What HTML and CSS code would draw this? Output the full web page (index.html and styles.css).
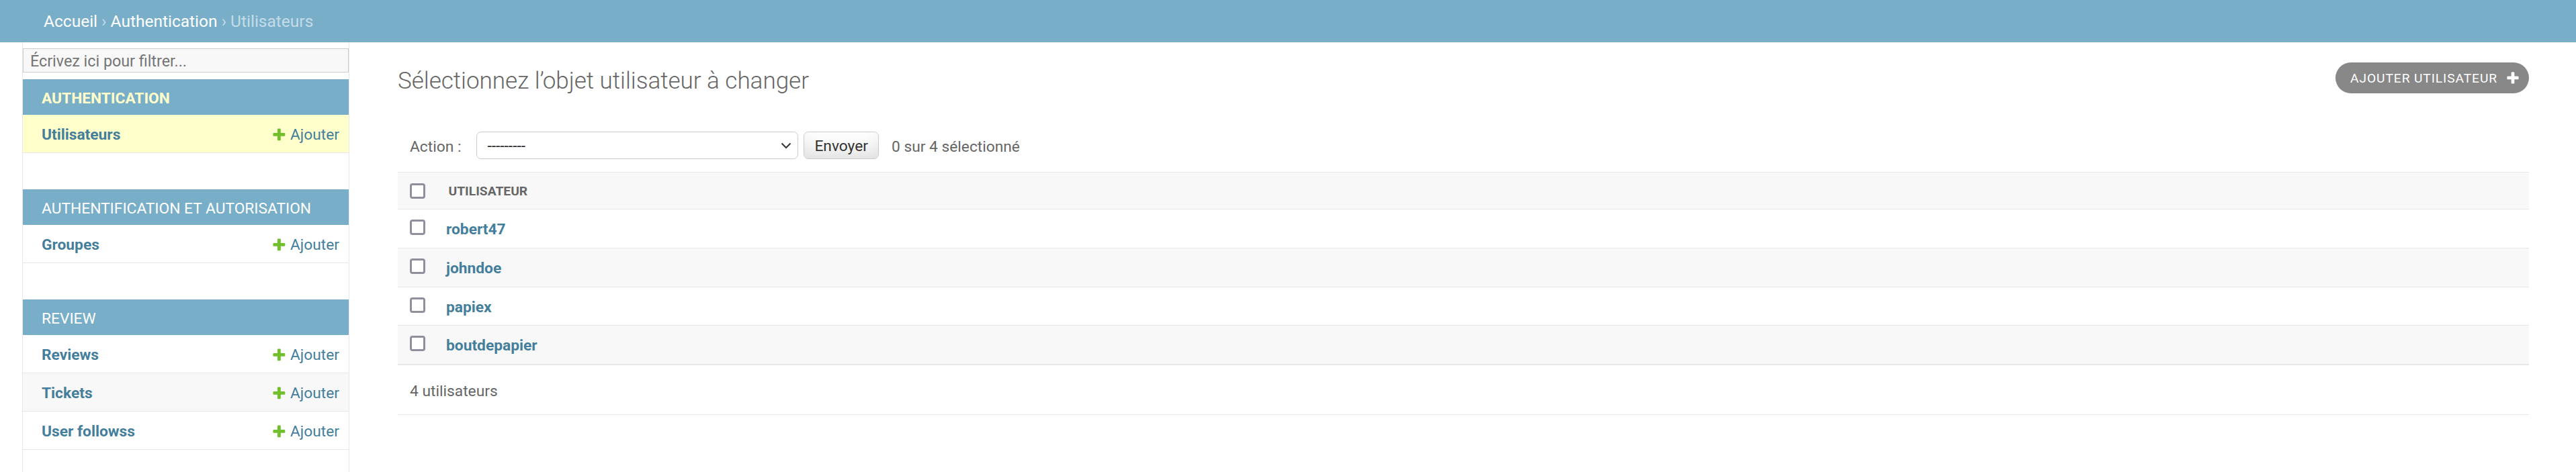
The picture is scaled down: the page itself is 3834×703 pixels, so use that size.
FILE: index.html
```html
<!DOCTYPE html>
<html lang="fr">
<head>
<meta charset="utf-8">
<title>Sélectionnez l’objet utilisateur à changer | Site d’administration de Django</title>
<link rel="stylesheet" href="styles.css">
</head>
<body>
<div class="breadcrumbs">
  <a href="#">Accueil</a> › <a href="#">Authentication</a> › Utilisateurs
</div>
<div class="main">
  <button class="toggle-nav" type="button" aria-label="Afficher/masquer la barre de navigation"></button>
  <nav class="sidebar">
    <input class="nav-filter" type="search" placeholder="Écrivez ici pour filtrer..." aria-label="Écrivez ici pour filtrer...">

    <div class="app-module">
      <div class="app-caption current"><a href="#">Authentication</a></div>
      <div class="model-row selected">
        <a class="model-link" href="#">Utilisateurs</a>
        <a class="addlink" href="#"><svg class="add-icon" viewBox="0 0 1792 1792" aria-hidden="true"><path d="M1600 796v192q0 40-28 68t-68 28h-416v416q0 40-28 68t-68 28h-192q-40 0-68-28t-28-68v-416h-416q-40 0-68-28t-28-68v-192q0-40 28-68t68-28h416v-416q0-40 28-68t68-28h192q40 0 68 28t28 68v416h416q40 0 68 28t28 68z"/></svg>Ajouter</a>
      </div>
    </div>

    <div class="app-module">
      <div class="app-caption"><a href="#">Authentification et autorisation</a></div>
      <div class="model-row">
        <a class="model-link" href="#">Groupes</a>
        <a class="addlink" href="#"><svg class="add-icon" viewBox="0 0 1792 1792" aria-hidden="true"><path d="M1600 796v192q0 40-28 68t-68 28h-416v416q0 40-28 68t-68 28h-192q-40 0-68-28t-28-68v-416h-416q-40 0-68-28t-28-68v-192q0-40 28-68t68-28h416v-416q0-40 28-68t68-28h192q40 0 68 28t28 68v416h416q40 0 68 28t28 68z"/></svg>Ajouter</a>
      </div>
    </div>

    <div class="app-module">
      <div class="app-caption"><a href="#">Review</a></div>
      <div class="model-row">
        <a class="model-link" href="#">Reviews</a>
        <a class="addlink" href="#"><svg class="add-icon" viewBox="0 0 1792 1792" aria-hidden="true"><path d="M1600 796v192q0 40-28 68t-68 28h-416v416q0 40-28 68t-68 28h-192q-40 0-68-28t-28-68v-416h-416q-40 0-68-28t-28-68v-192q0-40 28-68t68-28h416v-416q0-40 28-68t68-28h192q40 0 68 28t28 68v416h416q40 0 68 28t28 68z"/></svg>Ajouter</a>
      </div>
      <div class="model-row alt">
        <a class="model-link" href="#">Tickets</a>
        <a class="addlink" href="#"><svg class="add-icon" viewBox="0 0 1792 1792" aria-hidden="true"><path d="M1600 796v192q0 40-28 68t-68 28h-416v416q0 40-28 68t-68 28h-192q-40 0-68-28t-28-68v-416h-416q-40 0-68-28t-28-68v-192q0-40 28-68t68-28h416v-416q0-40 28-68t68-28h192q40 0 68 28t28 68v416h416q40 0 68 28t28 68z"/></svg>Ajouter</a>
      </div>
      <div class="model-row">
        <a class="model-link" href="#">User followss</a>
        <a class="addlink" href="#"><svg class="add-icon" viewBox="0 0 1792 1792" aria-hidden="true"><path d="M1600 796v192q0 40-28 68t-68 28h-416v416q0 40-28 68t-68 28h-192q-40 0-68-28t-28-68v-416h-416q-40 0-68-28t-28-68v-192q0-40 28-68t68-28h416v-416q0-40 28-68t68-28h192q40 0 68 28t28 68v416h416q40 0 68 28t28 68z"/></svg>Ajouter</a>
      </div>
    </div>
  </nav>

  <main class="content">
    <div class="content-head">
      <h1>Sélectionnez l’objet utilisateur à changer</h1>
      <a class="object-tool" href="#">Ajouter utilisateur<svg class="tool-icon" viewBox="0 0 1792 1792" aria-hidden="true"><path d="M1600 796v192q0 40-28 68t-68 28h-416v416q0 40-28 68t-68 28h-192q-40 0-68-28t-28-68v-416h-416q-40 0-68-28t-28-68v-192q0-40 28-68t68-28h416v-416q0-40 28-68t68-28h192q40 0 68 28t28 68v416h416q40 0 68 28t28 68z"/></svg></a>
    </div>

    <form class="changelist">
      <div class="actions">
        <label class="action-label" for="action">Action :</label>
        <span class="select-wrap">
          <select id="action" class="action-select">
            <option>---------</option>
            <option>Supprimer les utilisateurs sélectionnés</option>
          </select>
          <svg class="chevron" viewBox="0 0 16 10" aria-hidden="true"><polyline points="1.5,1.5 8,8 14.5,1.5"/></svg>
        </span>
        <button class="go" type="button">Envoyer</button>
        <span class="counter">0 sur 4 sélectionné</span>
      </div>

      <table class="result-list">
        <thead>
          <tr>
            <th class="cb-col"><input class="cb" type="checkbox" aria-label="Tout sélectionner"></th>
            <th class="col-head"><span>Utilisateur</span></th>
          </tr>
        </thead>
        <tbody>
          <tr>
            <td class="cb-col"><input class="cb" type="checkbox" aria-label="robert47"></td>
            <th class="name"><a href="#">robert47</a></th>
          </tr>
          <tr class="alt">
            <td class="cb-col"><input class="cb" type="checkbox" aria-label="johndoe"></td>
            <th class="name"><a href="#">johndoe</a></th>
          </tr>
          <tr>
            <td class="cb-col"><input class="cb" type="checkbox" aria-label="papiex"></td>
            <th class="name"><a href="#">papiex</a></th>
          </tr>
          <tr class="alt">
            <td class="cb-col"><input class="cb" type="checkbox" aria-label="boutdepapier"></td>
            <th class="name"><a href="#">boutdepapier</a></th>
          </tr>
        </tbody>
      </table>
      <p class="paginator">4 utilisateurs</p>
    </form>
  </main>
</div>
</body>
</html>
```

FILE: styles.css
```css
* { box-sizing: border-box; }

html, body {
  margin: 0;
  padding: 0;
}

body {
  min-height: 100vh;
  display: flex;
  flex-direction: column;
  font-family: Roboto, "Liberation Sans", Arial, sans-serif;
  font-size: 22.75px;
  color: #333;
  background: #fff;
}

a {
  color: #447e9b;
  text-decoration: none;
}

/* breadcrumbs bar */
.breadcrumbs {
  flex: 0 0 63px;
  padding: 17.5px 65px;
  background: #79aec8;
  color: #c4dce8;
  font-size: 24.5px;
  line-height: 28px;
  white-space: nowrap;
}
.breadcrumbs a { color: #fff; }

/* main area */
.main {
  flex: 1;
  display: flex;
}

.toggle-nav {
  flex: 0 0 34px;
  padding: 0;
  border: 0;
  border-right: 1px solid #e8e8e8;
  background: #fff;
}

.sidebar {
  flex: 0 0 486px;
  border-right: 1px solid #e8e8e8;
}

.nav-filter {
  display: block;
  width: 100%;
  height: 36px;
  margin: 9px 0 10px;
  padding: 4px 10px 2px;
  border: 1px solid #ccc;
  background: #f8f8f8;
  color: #333;
  font-family: inherit;
  font-size: 23.3px;
  -webkit-appearance: none;
  appearance: none;
  border-radius: 0;
  outline: none;
}
.nav-filter::placeholder { color: #757575; }

.app-module { margin-bottom: 54px; }

.app-caption {
  height: 53px;
  padding: 4px 28px 0;
  line-height: 49px;
  background: #79aec8;
  font-size: 22.75px;
  text-transform: uppercase;
  white-space: nowrap;
}
.app-caption a { color: #fff; }
.app-caption.current a {
  color: #ffc;
  font-weight: 700;
}

.model-row {
  height: 57px;
  display: flex;
  align-items: center;
  justify-content: space-between;
  padding: 4px 14px 0 28px;
  border-bottom: 1px solid #e8e8e8;
  line-height: 28px;
}
.model-row.alt { background: #f8f8f8; }
.model-row.selected { background: #ffc; }

.model-link { font-weight: 700; }

.addlink {
  display: inline-flex;
  align-items: center;
  gap: 5px;
}
.add-icon {
  width: 22.75px;
  height: 22.75px;
  fill: #70bf2b;
  margin-top: -1px;
}

/* content */
.content {
  flex: 1;
  min-width: 0;
  padding: 35px 70px 0 72px;
}

.content-head {
  display: flex;
  justify-content: space-between;
  align-items: flex-start;
}

h1 {
  margin: 2px 0 33px;
  font-size: 35px;
  line-height: 41px;
  font-weight: 300;
  color: #666;
}

.object-tool {
  display: flex;
  align-items: center;
  height: 46px;
  margin-top: -5px;
  padding: 0 13px 0 22px;
  border-radius: 23px;
  background: #888;
  color: #fff;
  font-size: 19.25px;
  letter-spacing: 0.875px;
  text-transform: uppercase;
  white-space: nowrap;
}
.tool-icon {
  width: 22px;
  height: 22px;
  margin-left: 12px;
  fill: #fff;
}

/* actions */
.actions {
  display: flex;
  align-items: center;
  padding: 22px 18px 19px;
  color: #666;
}

.action-label {
  white-space: nowrap;
  padding-top: 3px;
}

.select-wrap {
  position: relative;
  display: block;
  margin-left: 23px;
}
.action-select {
  display: block;
  width: 479px;
  height: 41px;
  padding: 2px 40px 0 15px;
  border: 1px solid #ccc;
  border-radius: 7px;
  background: #fff;
  color: #222;
  font-family: inherit;
  font-size: 22.75px;
  -webkit-appearance: none;
  appearance: none;
}
.chevron {
  position: absolute;
  right: 10px;
  top: 16px;
  width: 16px;
  height: 10px;
  fill: none;
  stroke: #333;
  stroke-width: 2;
  pointer-events: none;
}

.go {
  height: 41px;
  margin-left: 8px;
  padding: 3px 15px 0;
  border: 1px solid #ccc;
  border-radius: 7px;
  background: #fff;
  box-shadow: inset 0 -26px 35px -17px rgba(0, 0, 0, 0.15);
  color: #333;
  font-family: inherit;
  font-size: 22.75px;
  line-height: 1;
}

.counter {
  margin-left: 19px;
  padding-top: 3px;
  white-space: nowrap;
}

/* result table */
.result-list {
  width: 100%;
  border-collapse: collapse;
}

.result-list thead th {
  height: 55px;
  padding: 0;
  background: #f8f8f8;
  border-top: 1px solid #e8e8e8;
  border-bottom: 1px solid #e8e8e8;
  vertical-align: middle;
  text-align: left;
}

.cb-col {
  width: 58px;
  text-align: center;
}

.col-head span {
  display: block;
  padding: 1px 17.5px 0;
  font-size: 19.25px;
  font-weight: 700;
  color: #666;
  text-transform: uppercase;
}

.result-list tbody td,
.result-list tbody th {
  padding: 16px 14px 12px;
  line-height: 28.75px;
  border-bottom: 1px solid #e8e8e8;
  vertical-align: top;
  text-align: left;
}
.result-list tbody tr.alt { background: #f8f8f8; }
.result-list tbody .name a { font-weight: 700; }

.cb {
  display: block;
  width: 23px;
  height: 23px;
  margin: 0 auto;
  border: 3px solid #8f8f9d;
  border-radius: 4px;
  background: #fff;
  -webkit-appearance: none;
  appearance: none;
}
.result-list tbody .cb {
  margin-top: -1px;
}

.paginator {
  margin: 0;
  height: 75px;
  padding: 4px 18px 0;
  line-height: 69px;
  border-top: 1px solid #e8e8e8;
  border-bottom: 1px solid #e8e8e8;
  color: #666;
}
```
